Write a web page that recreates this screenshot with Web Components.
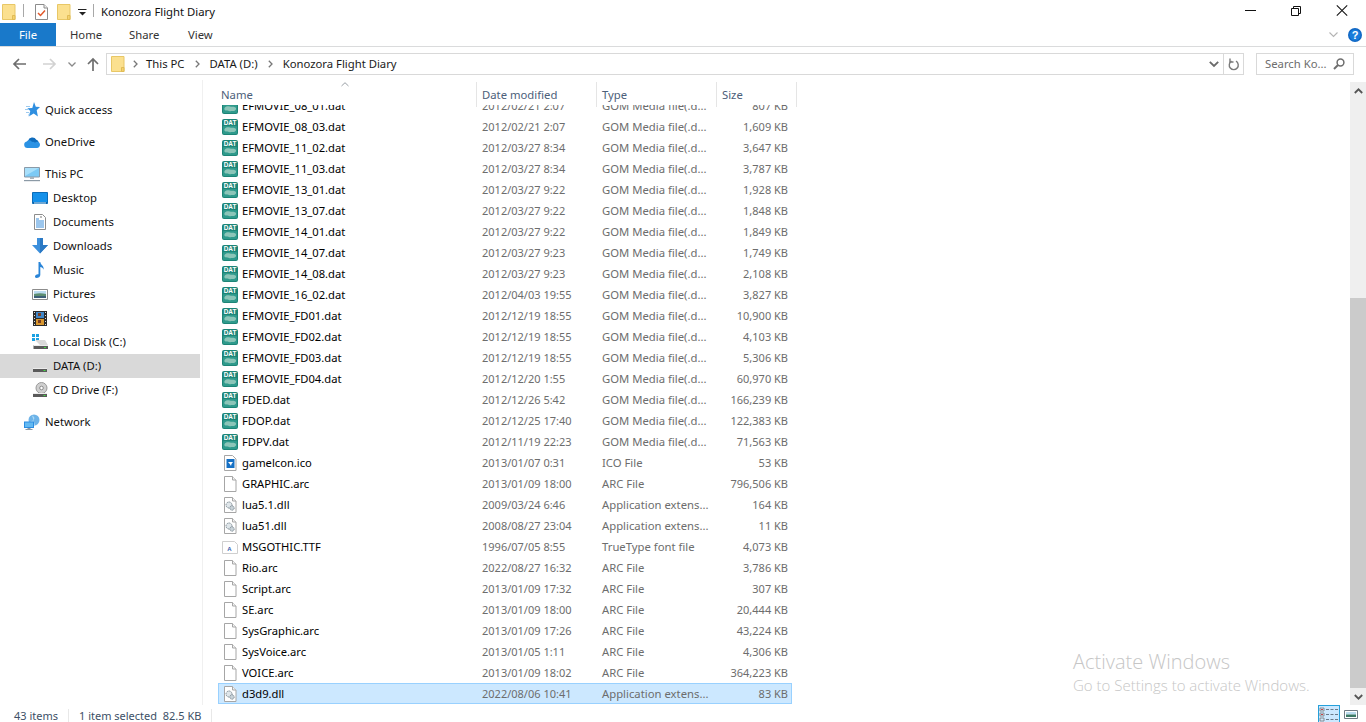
<!DOCTYPE html>
<html lang="en">
<head>
<meta charset="utf-8">
<title>Konozora Flight Diary</title>
<style>
html,body{margin:0;padding:0;background:#fff;overflow:hidden}
body{width:1366px;height:722px;font:11.3px/16px "Noto Sans","Open Sans",sans-serif;color:#000}
</style>
</head>
<body>
<explorer-window>
  <title-bar slot="top">Konozora Flight Diary</title-bar>
  <ribbon-tabs slot="top"></ribbon-tabs>
  <address-row slot="top"></address-row>
  <nav-pane slot="nav">
    <nav-item icon="quick" gap>Quick access</nav-item>
    <nav-item icon="onedrive" gap>OneDrive</nav-item>
    <nav-item icon="pc">This PC</nav-item>
    <nav-item icon="desktop" child>Desktop</nav-item>
    <nav-item icon="documents" child>Documents</nav-item>
    <nav-item icon="downloads" child>Downloads</nav-item>
    <nav-item icon="music" child>Music</nav-item>
    <nav-item icon="pictures" child>Pictures</nav-item>
    <nav-item icon="videos" child>Videos</nav-item>
    <nav-item icon="cdisk" child>Local Disk (C:)</nav-item>
    <nav-item icon="drive" child selected>DATA (D:)</nav-item>
    <nav-item icon="cd" child gap>CD Drive (F:)</nav-item>
    <nav-item icon="network">Network</nav-item>
  </nav-pane>
  <file-pane slot="files">
    <file-row icon="dat" date="2012/02/21 2:07" type="GOM Media file(.d..." size="807 KB">EFMOVIE_08_01.dat</file-row>
    <file-row icon="dat" date="2012/02/21 2:07" type="GOM Media file(.d..." size="1,609 KB">EFMOVIE_08_03.dat</file-row>
    <file-row icon="dat" date="2012/03/27 8:34" type="GOM Media file(.d..." size="3,647 KB">EFMOVIE_11_02.dat</file-row>
    <file-row icon="dat" date="2012/03/27 8:34" type="GOM Media file(.d..." size="3,787 KB">EFMOVIE_11_03.dat</file-row>
    <file-row icon="dat" date="2012/03/27 9:22" type="GOM Media file(.d..." size="1,928 KB">EFMOVIE_13_01.dat</file-row>
    <file-row icon="dat" date="2012/03/27 9:22" type="GOM Media file(.d..." size="1,848 KB">EFMOVIE_13_07.dat</file-row>
    <file-row icon="dat" date="2012/03/27 9:22" type="GOM Media file(.d..." size="1,849 KB">EFMOVIE_14_01.dat</file-row>
    <file-row icon="dat" date="2012/03/27 9:23" type="GOM Media file(.d..." size="1,749 KB">EFMOVIE_14_07.dat</file-row>
    <file-row icon="dat" date="2012/03/27 9:23" type="GOM Media file(.d..." size="2,108 KB">EFMOVIE_14_08.dat</file-row>
    <file-row icon="dat" date="2012/04/03 19:55" type="GOM Media file(.d..." size="3,827 KB">EFMOVIE_16_02.dat</file-row>
    <file-row icon="dat" date="2012/12/19 18:55" type="GOM Media file(.d..." size="10,900 KB">EFMOVIE_FD01.dat</file-row>
    <file-row icon="dat" date="2012/12/19 18:55" type="GOM Media file(.d..." size="4,103 KB">EFMOVIE_FD02.dat</file-row>
    <file-row icon="dat" date="2012/12/19 18:55" type="GOM Media file(.d..." size="5,306 KB">EFMOVIE_FD03.dat</file-row>
    <file-row icon="dat" date="2012/12/20 1:55" type="GOM Media file(.d..." size="60,970 KB">EFMOVIE_FD04.dat</file-row>
    <file-row icon="dat" date="2012/12/26 5:42" type="GOM Media file(.d..." size="166,239 KB">FDED.dat</file-row>
    <file-row icon="dat" date="2012/12/25 17:40" type="GOM Media file(.d..." size="122,383 KB">FDOP.dat</file-row>
    <file-row icon="dat" date="2012/11/19 22:23" type="GOM Media file(.d..." size="71,563 KB">FDPV.dat</file-row>
    <file-row icon="ico" date="2013/01/07 0:31" type="ICO File" size="53 KB">gamelcon.ico</file-row>
    <file-row icon="page" date="2013/01/09 18:00" type="ARC File" size="796,506 KB">GRAPHIC.arc</file-row>
    <file-row icon="dll" date="2009/03/24 6:46" type="Application extens..." size="164 KB">lua5.1.dll</file-row>
    <file-row icon="dll" date="2008/08/27 23:04" type="Application extens..." size="11 KB">lua51.dll</file-row>
    <file-row icon="ttf" date="1996/07/05 8:55" type="TrueType font file" size="4,073 KB">MSGOTHIC.TTF</file-row>
    <file-row icon="page" date="2022/08/27 16:32" type="ARC File" size="3,786 KB">Rio.arc</file-row>
    <file-row icon="page" date="2013/01/09 17:32" type="ARC File" size="307 KB">Script.arc</file-row>
    <file-row icon="page" date="2013/01/09 18:00" type="ARC File" size="20,444 KB">SE.arc</file-row>
    <file-row icon="page" date="2013/01/09 17:26" type="ARC File" size="43,224 KB">SysGraphic.arc</file-row>
    <file-row icon="page" date="2013/01/05 1:11" type="ARC File" size="4,306 KB">SysVoice.arc</file-row>
    <file-row icon="page" date="2013/01/09 18:02" type="ARC File" size="364,223 KB">VOICE.arc</file-row>
    <file-row icon="dll" date="2022/08/06 10:41" type="Application extens..." size="83 KB" selected>d3d9.dll</file-row>
  </file-pane>
  <scroll-bar slot="scroll"></scroll-bar>
  <status-bar slot="bottom"></status-bar>
  <activate-mark slot="over"></activate-mark>
</explorer-window>
<script>
const folder = '<path d="M.5.5h12.500v15H.5z" fill="#fbe08f" stroke="#e8c766"/><path d="M10.500 11.500h2.500v4h-2.500z" fill="#f4d26e" stroke="#e0bb55"/>';
const ICONS = {
  folder:[14,16,folder],
  check:[13,16,'<path d="M.5.5h8.500l3.500 3.500v11.500H.5z" fill="#fff" stroke="#8c8c8c"/><path d="M9 .5V4h3.500" fill="#eee" stroke="#8c8c8c"/><path d="M3 9l2.500 2.500L10 6.500" fill="none" stroke="#e2582a" stroke-width="1.500"/>'],
  dropdown:[9,8,'<path d="M0 1.500h8.500" stroke="#222"/><path d="M1 4h7L4.500 7.500z" fill="#222"/>'],
  back:[13,12,'<path d="M6 1L1 6l5 5M1 6h12" fill="none" stroke="#6e6e6e" stroke-width="1.700"/>'],
  forward:[13,12,'<path d="M7 1l5 5-5 5M12 6H0" fill="none" stroke="#d2d2d2" stroke-width="1.700"/>'],
  recent:[8,5,'<path d="M.5.5L4 4 7.500.5" fill="none" stroke="#8a8a8a" stroke-width="1.300"/>'],
  up:[12,13,'<path d="M1 6l5-5 5 5M6 1v12" fill="none" stroke="#6e6e6e" stroke-width="1.700"/>'],
  crumb:[5,8,'<path d="M.8.8L4 4 .8 7.200" fill="none" stroke="#777" stroke-width="1.300"/>'],
  addrdown:[10,6,'<path d="M.8.8L5 5 9.200.8" fill="none" stroke="#6a6a6a" stroke-width="1.800"/>'],
  refresh:[11,13,'<path d="M3.500 3.200a4.500 4.500 0 1 0 4.500 0" fill="none" stroke="#7a7a7a" stroke-width="1.400"/><path d="M2 .5V4h3.500" fill="none" stroke="#7a7a7a" stroke-width="1.400"/>'],
  search:[12,12,'<circle cx="7.500" cy="4.500" r="3.400" fill="none" stroke="#6e6e6e" stroke-width="1.500"/><path d="M5 7l-4 4" stroke="#6e6e6e" stroke-width="2"/>'],
  min:[11,1,'<path d="M0 .5h11" stroke="#111"/>'],
  restore:[10,10,'<path d="M.5 2.500h7v7h-7zM2.500 2.500v-2h7v7h-2" fill="none" stroke="#111"/>'],
  close:[12,11,'<path d="M.8.3l10.400 10.400M11.200.3L.8 10.700" stroke="#111" stroke-width="1.050"/>'],
  ribchev:[9,5,'<path d="M.5.5l4 4 4-4" fill="none" stroke="#b4b4b4" stroke-width="1.100"/>'],
  help:[14,14,'<circle cx="7" cy="7" r="7" fill="#1067c4"/><circle cx="7" cy="7" r="5.500" fill="#1a7ddb"/>'],
  sort:[8,4,'<path d="M.5 4L4 .7 7.500 4" fill="none" stroke="#9aa0a6"/>'],
  sbup:[9,6,'<path d="M.8 5L4.500 1.300 8.200 5" fill="none" stroke="#555" stroke-width="1.800"/>'],
  sbdown:[9,6,'<path d="M.8 1L4.500 4.700 8.200 1" fill="none" stroke="#555" stroke-width="1.800"/>'],
  quick:[16,16,'<path d="M10 0l1.800 4.800 4.200.2-3.300 3.200 1.200 6.300-4.200-3-5 3 1.600-5.500-3-2.800 5-.2z" fill="#2f8fe0"/><path d="M2 4.500h4M1 7.500h3.500M2 10.500h3M4 13h2" stroke="#9dcaef"/>'],
  onedrive:[16,16,'<path d="M4 7a4.500 4.500 0 0 1 8.300-1.200A3.200 3.200 0 0 1 14 11H5z" fill="#0f6cbd"/><path d="M3.300 14A3.300 3.300 0 0 1 2.700 7.500 3.100 3.100 0 0 1 8 8a3 3 0 0 1 3 .8 2.800 2.800 0 0 1 5 1.800c0 2-1.400 3.400-3 3.400z" fill="#2b92e4"/>'],
  pc:[16,16,'<path d="M.5 1.500h15v9.500H.5z" fill="#7ccaf5" stroke="#8a9aa8"/><path d="M1 10V2h14z" fill="#a9e0fb"/><path d="M6 11h4v2H6z" fill="#a9b4bd"/><path d="M0 14h16v1.200H0z" fill="#8c9aa6"/>'],
  desktop:[16,16,'<path d="M.5 2.500h15v11H.5z" fill="#1591ea" stroke="#0b6cb8"/><path d="M1 12.200h14v1.300H1z" fill="#0a5c9f"/><path d="M2 13h12" stroke="#cfe9fb"/>'],
  documents:[16,16,'<path d="M2.500.5h8l3 3v12h-11z" fill="#fff" stroke="#8d8d8d"/><path d="M4 5h3M4 7h8M4 9h8M4 11h8M4 13h8" stroke="#3b8edb"/><path d="M8 3h2" stroke="#777"/>'],
  downloads:[16,16,'<path d="M5 0h6v7h5l-8 8.500L0 7h5z" fill="#3c8fdc"/><path d="M8 0h3v7h5l-8 8.500z" fill="#2b79c4"/>'],
  music:[16,16,'<path d="M6.500 0h1.800c.3 3 4 3.500 3.300 7.800C11 5.500 9.500 5 8.300 4.900V13c0 2-2 3-3.800 3C3 16 2.500 14.500 3.500 13.300c1-1 2.300-1.200 3-1z" fill="#2a85d8"/>'],
  pictures:[16,16,'<path d="M.5 3.500h15v10H.5z" fill="#fff" stroke="#8c8c8c"/><path d="M2 5h12v3H2z" fill="#bcdcf0"/><path d="M2 8c4-1 8-1 12 0v2H2z" fill="#5f8f72"/><path d="M2 10h12v2H2z" fill="#3d6078"/>'],
  videos:[16,16,'<path d="M1 1h14v15H1z" fill="#2b2b2b"/><path d="M4 2h8v6H4z" fill="#3e86c8"/><path d="M4 9h8v6H4z" fill="#d8962e"/><path d="M6 10h3v3H6zM6 3h3v3H6z" fill="#7a3f22"/><path d="M2 2h1v1H2zM2 5h1v1H2zM2 8h1v1H2zM2 11h1v1H2zM2 14h1v1H2zM13 2h1v1h-1zM13 5h1v1h-1zM13 8h1v1h-1zM13 11h1v1h-1zM13 14h1v1h-1z" fill="#ddd"/>'],
  cdisk:[16,16,'<path d="M0 0h3v3H0zM4 0h3v3H4zM0 4h3v3H0zM4 4h3v3H4z" fill="#1ba1e2"/><path d="M3 6h10l3 5H8z" fill="#d9d9d9"/><path d="M1.500 11h14.500v4H1.500z" fill="#5a5a5a"/><path d="M1.500 11h14.500v1H1.500z" fill="#ececec"/><path d="M12 13h2v1h-2z" fill="#3fdc3f"/>'],
  drive:[16,16,'<path d="M3 6h10l2 4H1z" fill="#d9d9d9"/><path d="M1 10h14v4H1z" fill="#5a5a5a"/><path d="M1 10h14v1H1z" fill="#ececec"/><path d="M11.500 12h2v1h-2z" fill="#3fdc3f"/>'],
  cd:[16,16,'<circle cx="9.500" cy="6" r="5.500" fill="#cfcfcf" stroke="#9a9a9a"/><circle cx="9.500" cy="6" r="1.800" fill="#fff" stroke="#8a8a8a"/><path d="M1 11h14v4H1z" fill="#5a5a5a"/><path d="M1 11h14v1H1z" fill="#ececec"/><path d="M11.500 13h2v1h-2z" fill="#3fdc3f"/>'],
  network:[16,16,'<circle cx="10" cy="6" r="5.500" fill="#6db3e8"/><path d="M8 1.500c2 1 3 2 2 4s-4 1-4 3 3 3 5 2.500" fill="#a9d8f5"/><path d="M0 7.500h10v6.500H0z" fill="#2b8ce0"/><path d="M1 8.500h8v4.500H1z" fill="#62b9f2"/><path d="M3.500 14h3v1h2v1h-7v-1h2z" fill="#8c9aa6"/>'],
  dat:[16,16,'<rect width="16" height="16" rx="2" fill="#1d8577"/><rect x="1" y="7" width="14" height="8" rx="1" fill="#2f9a8c"/><path d="M2.500 10c1-2 3.500-2 5.500-1.500s4-.5 5.500 1 0 3.500-2.500 3.500-2.500.5-4 0-5.500 0-4.500-3z" fill="#8cc5b8"/><text x="8" y="6.300" text-anchor="middle" font-family="Liberation Sans,sans-serif" font-weight="700" font-size="6.400" fill="#fff">DAT</text>'],
  page:[16,16,'<path d="M2.500.5h8l3.500 3.500v11.500H2.500z" fill="#fff" stroke="#a6a6a6"/><path d="M10.500.5V4H14" fill="#f2f2f2" stroke="#a6a6a6"/>'],
  ico:[16,16,'<path d="M2.500.5h8l3.500 3.500v11.500H2.500z" fill="#fff" stroke="#a6a6a6"/><path d="M4.500 4h8v9h-8z" fill="#1570c4"/><path d="M6 7h5l-1.500 2-.5 2-1.200-2z" fill="#fff"/>'],
  dll:[16,16,'<path d="M2.500.5h8l3.500 3.500v11.500H2.500z" fill="#fff" stroke="#a6a6a6"/><path d="M10.500.5V4H14" fill="#f2f2f2" stroke="#a6a6a6"/><circle cx="7" cy="8" r="3" fill="#dfe6ea" stroke="#7f8c95" stroke-dasharray="1.500 .7"/><circle cx="10" cy="11" r="2.200" fill="#c8d2d8" stroke="#7f8c95" stroke-dasharray="1.200 .6"/>'],
  ttf:[16,16,'<path d="M.5 2.500h12l3 3v9H.5z" fill="#fff" stroke="#cfcfcf"/><text x="7.500" y="11.500" text-anchor="middle" font-family="Liberation Sans,sans-serif" font-weight="700" font-size="6" fill="#3558b0">A</text>'],
  details:[18,13,'<path d="M0 0h4v3H0zM0 5h4v3H0zM0 10h4v3H0z" fill="none" stroke="#7a7a7a" stroke-width=".8"/><path d="M1 1h2v1H1zM1 6h2v1H1z" fill="#c44"/><path d="M6 1.500h3M10.500 1.500h3M15 1.500h3M6 6.500h3M10.500 6.500h3M15 6.500h3M6 11.500h3M10.500 11.500h3M15 11.500h3" stroke="#6a7a8a"/>'],
  large:[14,9,'<path d="M.5.5h13v8H.5z" fill="#fff" stroke="#707a84"/><path d="M2 2h10v2.500H2z" fill="#bcdcf0"/><path d="M2 4.500h10V7H2z" fill="#3d7a66"/>']
};
function def(name, css, html, setup){
  const t=document.createElement('template');
  t.innerHTML='<style>'+css+'</style>'+html;
  customElements.define(name,class extends HTMLElement{
    constructor(){super();this.attachShadow({mode:'open'}).appendChild(t.content.cloneNode(true));}
    connectedCallback(){if(setup&&!this._done){this._done=1;setup.call(this,this.shadowRoot);}}
  });
}
customElements.define('win-icon',class extends HTMLElement{
  constructor(){super();this.attachShadow({mode:'open'});}
  connectedCallback(){
    const [w,h,b]=ICONS[this.getAttribute('name')]||ICONS.page;
    this.shadowRoot.innerHTML='<style>:host{display:inline-flex;flex:none;line-height:0}svg{display:block;overflow:visible}</style><svg xmlns="http://www.w3.org/2000/svg" width="'+w+'" height="'+h+'" viewBox="0 0 '+w+' '+h+'">'+b+'</svg>';
  }
});
def('explorer-window',
 `:host{display:flex;flex-direction:column;position:relative;width:1366px;height:722px;overflow:hidden}
  .main{flex:1;min-height:0;display:flex}
  ::slotted([slot=files]){flex:1;min-width:0}`,
 `<slot name="top"></slot><div class="main"><slot name="nav"></slot><slot name="files"></slot><slot name="scroll"></slot></div><slot name="bottom"></slot><slot name="over"></slot>`);
def('title-bar',
 `:host{display:flex;align-items:flex-start;height:23px;color:#111}
  .q{display:flex;align-items:center;height:23px;padding-left:2px}
  .s{width:1px;height:13px;background:#a8a8a8;margin:0 11px 0 7px;transform:translateY(-1px)}
  .t{line-height:23px}
  .sp{flex:1}
  .b{width:46px;height:21px;display:flex;align-items:center;justify-content:center}`,
 `<div class="q"><win-icon name="folder"></win-icon><span class="s"></span><win-icon name="check"></win-icon><win-icon name="folder" style="margin-left:9px"></win-icon><win-icon name="dropdown" style="margin-left:7px"></win-icon><span class="s" style="margin-left:6px;margin-right:7px"></span></div>
  <div class="t"><slot></slot></div><div class="sp"></div>
  <div class="b"><win-icon name="min"></win-icon></div><div class="b"><win-icon name="restore"></win-icon></div><div class="b" style="margin-right:1px"><win-icon name="close"></win-icon></div>`);
def('ribbon-tabs',
 `:host{display:flex;align-items:center;height:23px;border-bottom:1px solid #dadbdc;color:#333}
  .file{width:56px;height:23px;background:#1979ca;color:#fff;text-align:center;line-height:23px}
  .tab{margin-left:14px;width:45px;line-height:23px}
  .sp{flex:1}
  .help{position:relative;width:14px;height:14px;margin:0 4px 0 10px}
  .help b{position:absolute;inset:0;text-align:center;font:700 11px/14px "Liberation Sans",sans-serif;color:#fff}`,
 `<div class="file">File</div><div class="tab">Home</div><div class="tab">Share</div><div class="tab">View</div><div class="sp"></div>
  <win-icon name="ribchev"></win-icon><div class="help"><win-icon name="help"></win-icon><b>?</b></div>`);
def('address-row',
 `:host{display:flex;align-items:flex-start;height:33px;padding-top:6px;box-sizing:border-box;color:#1a1a1a}
  .nav{width:106px;height:22px;display:flex;align-items:center;padding-left:13px;box-sizing:border-box;flex:none}
  .box{flex:none;box-sizing:border-box;height:22px;border:1px solid #d9d9d9;display:flex;align-items:center}
  .box span.x{padding-bottom:1px}
  .addr{width:1138px;padding-left:4px}
  .c{margin:0 10px}
  .sp{flex:1}
  .sep{width:1px;height:20px;background:#d9d9d9;margin:0 4px}
  .search{width:98px;margin-left:12px;padding:0 8px;color:#6d6d6d;justify-content:space-between}`,
 `<div class="nav"><win-icon name="back"></win-icon><win-icon name="forward" style="margin-left:17px"></win-icon><win-icon name="recent" style="margin-left:12px"></win-icon><win-icon name="up" style="margin-left:11px"></win-icon></div>
  <div class="box addr"><win-icon name="folder"></win-icon><win-icon class="c" style="margin:0 8px" name="crumb"></win-icon><span class="x">This PC</span><win-icon class="c" name="crumb"></win-icon><span class="x">DATA (D:)</span><win-icon class="c" name="crumb"></win-icon><span class="x">Konozora Flight Diary</span><span class="sp"></span><win-icon name="addrdown"></win-icon><span class="sep"></span><win-icon name="refresh" style="margin-right:4px"></win-icon></div>
  <div class="box search"><span class="x">Search Ko...</span><win-icon name="search"></win-icon></div>`);
def('nav-pane',
 `:host{display:block;width:203px;flex:none;box-sizing:border-box;padding-top:18px;border-right:1px solid #f0f0f0}`,
 `<slot></slot>`);
def('nav-item',
 `:host{display:flex;align-items:center;height:24px;width:200px;padding-left:24px;box-sizing:border-box;gap:5px;color:#111}
  :host([child]){padding-left:32px}
  :host([gap]){margin-bottom:8px}
  :host([selected]){background:#d9d9d9}`,
 `<win-icon></win-icon><span><slot></slot></span>`,
 function(r){const i=r.querySelector('win-icon');i.setAttribute('name',this.getAttribute('icon'));i.connectedCallback();});
def('file-pane',
 `:host{display:flex;flex-direction:column;min-height:0;padding-left:15px;box-sizing:border-box}
  .head{flex:none;display:flex;height:25px;margin-top:2px;color:#4c607a;line-height:26px;position:relative}
  .h{border-right:1px solid #e5e5e5;padding-left:5px;box-sizing:content-box;width:114px}
  .h.n{width:255px;padding-left:3px}
  .h.z{width:74px}
  .sort{position:absolute;left:123px;top:0}
  .list{flex:1;min-height:0;overflow:hidden;display:flex;flex-direction:column;justify-content:flex-end;margin-top:-2px;padding-bottom:1px}`,
 `<div class="head"><div class="h n">Name</div><div class="h">Date modified</div><div class="h">Type</div><div class="h z">Size</div><win-icon class="sort" name="sort"></win-icon></div>
  <div class="list"><slot></slot></div>`);
def('file-row',
 `:host{display:grid;flex:none;grid-template-columns:263px 120px 120px 69px;align-items:center;width:574px;height:21px;box-sizing:border-box;border:1px solid transparent;color:#6d6d6d}
  :host([selected]){background:#cce8ff;border-color:#99d1ff}
  .n{display:flex;align-items:center;gap:4px;padding-left:3px;color:#000;font-size:11.2px}
  .d{font-size:11px}
  .s{text-align:right;padding-right:3px;font-size:11px}`,
 `<div class="n"><win-icon></win-icon><span><slot></slot></span></div><div class="d"></div><div class="t"></div><div class="s"></div>`,
 function(r){const i=r.querySelector('win-icon');i.setAttribute('name',this.getAttribute('icon'));i.connectedCallback();
  r.querySelector('.d').textContent=this.getAttribute('date');r.querySelector('.t').textContent=this.getAttribute('type');r.querySelector('.s').textContent=this.getAttribute('size');});
def('scroll-bar',
 `:host{display:flex;flex-direction:column;flex:none;width:16px;margin-top:2px;background:#efefef}
  .b{height:17px;display:flex;align-items:center;justify-content:center;flex:none}
  .gap{height:199px;flex:none}
  .thumb{flex:1;background:#cbcbcb}`,
 `<div class="b"><win-icon name="sbup"></win-icon></div><div class="gap"></div><div class="thumb"></div><div class="b"><win-icon name="sbdown"></win-icon></div>`);
def('status-bar',
 `:host{display:flex;align-items:flex-start;height:17px;flex:none;padding-left:14px;box-sizing:border-box;color:#3d4f66;font-size:11px;line-height:15px}
  .x{margin-top:3px;line-height:15px}
  .w{width:44px;white-space:nowrap}
  .s{width:1px;height:13px;background:#e8e8e8;margin:4px 10px 0}
  .sp{flex:1}
  .v{display:flex;align-items:center;justify-content:center;height:17px;box-sizing:border-box}
  .on{width:22px;background:#cce8ff;border:1px solid #26a0da;border-bottom:0;margin-right:4px}
  .off{width:14px;margin-right:8px;padding-top:2px}`,
 `<span class="x w">43 items</span><span class="s"></span><span class="x">1 item selected&nbsp;&nbsp;82.5 KB</span><span class="s"></span><span class="sp"></span><div class="v on"><win-icon name="details"></win-icon></div><div class="v off"><win-icon name="large"></win-icon></div>`);
def('activate-mark',
 `:host{position:absolute;left:1073px;top:650px;color:#c6c6c6;white-space:nowrap;pointer-events:none}
  .a{font:300 20px/24px "Open Sans",sans-serif}
  .b{font:300 15px/22px "Open Sans",sans-serif}`,
 `<div class="a">Activate Windows</div><div class="b">Go to Settings to activate Windows.</div>`);
</script>
</body>
</html>
